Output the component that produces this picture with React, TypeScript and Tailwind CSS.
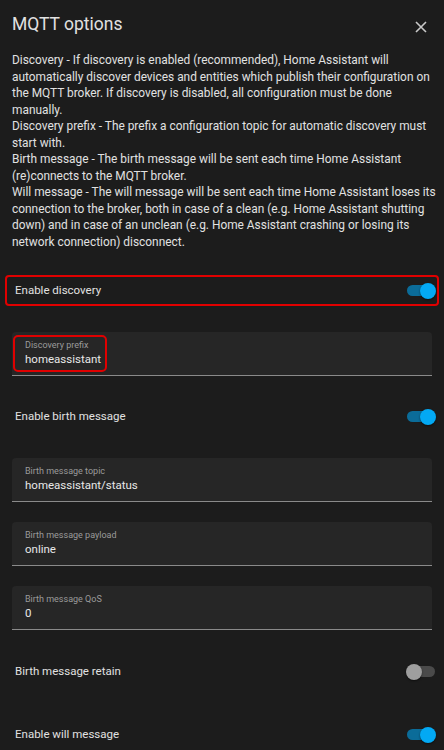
import React from 'react';

const Toggle = ({ on }: { on: boolean }) => (
  <div className="relative w-[30px] h-[16px] flex items-center">
    <div className={`w-[28px] h-[11px] ml-[1px] rounded-full ${on ? 'bg-[#0b6c99]' : 'bg-[#4a4a4a]'}`} />
    <div
      className={`absolute top-0 w-[16px] h-[16px] rounded-full shadow-[0_1px_2px_rgba(0,0,0,0.5)] ${
        on ? 'right-0 bg-[#03a9f4]' : 'left-0 bg-[#9e9e9e]'
      }`}
    />
  </div>
);

const SwitchRow = ({ label, on, highlight, className = '' }: { label: string; on: boolean; highlight?: boolean; className?: string }) => (
  <div
    className={`mx-[5px] h-[31px] flex items-center justify-between pl-[8px] pr-[1px] rounded-[4px] border-2 ${
      highlight ? 'border-[#e00000]' : 'border-transparent'
    } ${className}`}
  >
    <span className="text-[11.5px] text-[#e1e1e1]">{label}</span>
    <Toggle on={on} />
  </div>
);

const Field = ({ label, value, highlight, className = '' }: { label: string; value: string; highlight?: boolean; className?: string }) => (
  <div className={`mx-[12px] h-[44px] bg-[#262626] rounded-t-[4px] border-b border-[#8a8a8a] flex ${className}`}>
    <div
      className={`ml-[1px] mt-[3px] h-[37px] flex flex-col justify-center pl-[10px] pr-[4px] rounded-[5px] border-2 ${
        highlight ? 'border-[#e00000]' : 'border-transparent'
      }`}
    >
      <span className="text-[9px] leading-[11px] text-[#9b9b9b]">{label}</span>
      <span className="text-[11.5px] leading-[16px] text-[#e8e8e8]">{value}</span>
    </div>
  </div>
);

export default function App() {
  return (
    <div className="w-[444px] h-[750px] overflow-hidden bg-[#1c1c1c] font-['Roboto',sans-serif]">
      <div className="flex items-center justify-between pl-[12px] pr-[17px] pt-[12px] h-[36px]">
        <h1 className="text-[17.5px] text-[#e1e1e1] leading-[24px]">MQTT options</h1>
        <svg width="12" height="12" viewBox="0 0 12 12" className="mt-[6px]">
          <path d="M1 1L11 11M11 1L1 11" stroke="#c8c8c8" strokeWidth="1.6" />
        </svg>
      </div>
      <div className="pl-[12px] pr-[6px] pt-[16px] text-[11.9px] leading-[16.5px] text-[#e1e1e1]">
        <p>
          Discovery - If discovery is enabled (recommended), Home Assistant will automatically discover devices and
          entities which publish their configuration on the MQTT broker. If discovery is disabled, all configuration must
          be done manually.
        </p>
        <p>Discovery prefix - The prefix a configuration topic for automatic discovery must start with.</p>
        <p>Birth message - The birth message will be sent each time Home Assistant (re)connects to the MQTT broker.</p>
        <p>
          Will message - The will message will be sent each time Home Assistant loses its connection to the broker, both
          in case of a clean (e.g. Home Assistant shutting down) and in case of an unclean (e.g. Home Assistant crashing
          or losing its network connection) disconnect.
        </p>
      </div>
      <SwitchRow label="Enable discovery" on highlight className="mt-[25px]" />
      <Field label="Discovery prefix" value="homeassistant" highlight className="mt-[26px]" />
      <SwitchRow label="Enable birth message" on className="mt-[25px]" />
      <Field label="Birth message topic" value="homeassistant/status" className="mt-[26px]" />
      <Field label="Birth message payload" value="online" className="mt-[20px]" />
      <Field label="Birth message QoS" value="0" className="mt-[20px]" />
      <SwitchRow label="Birth message retain" on={false} className="mt-[26px]" />
      <SwitchRow label="Enable will message" on className="mt-[32px]" />
    </div>
  );
}
